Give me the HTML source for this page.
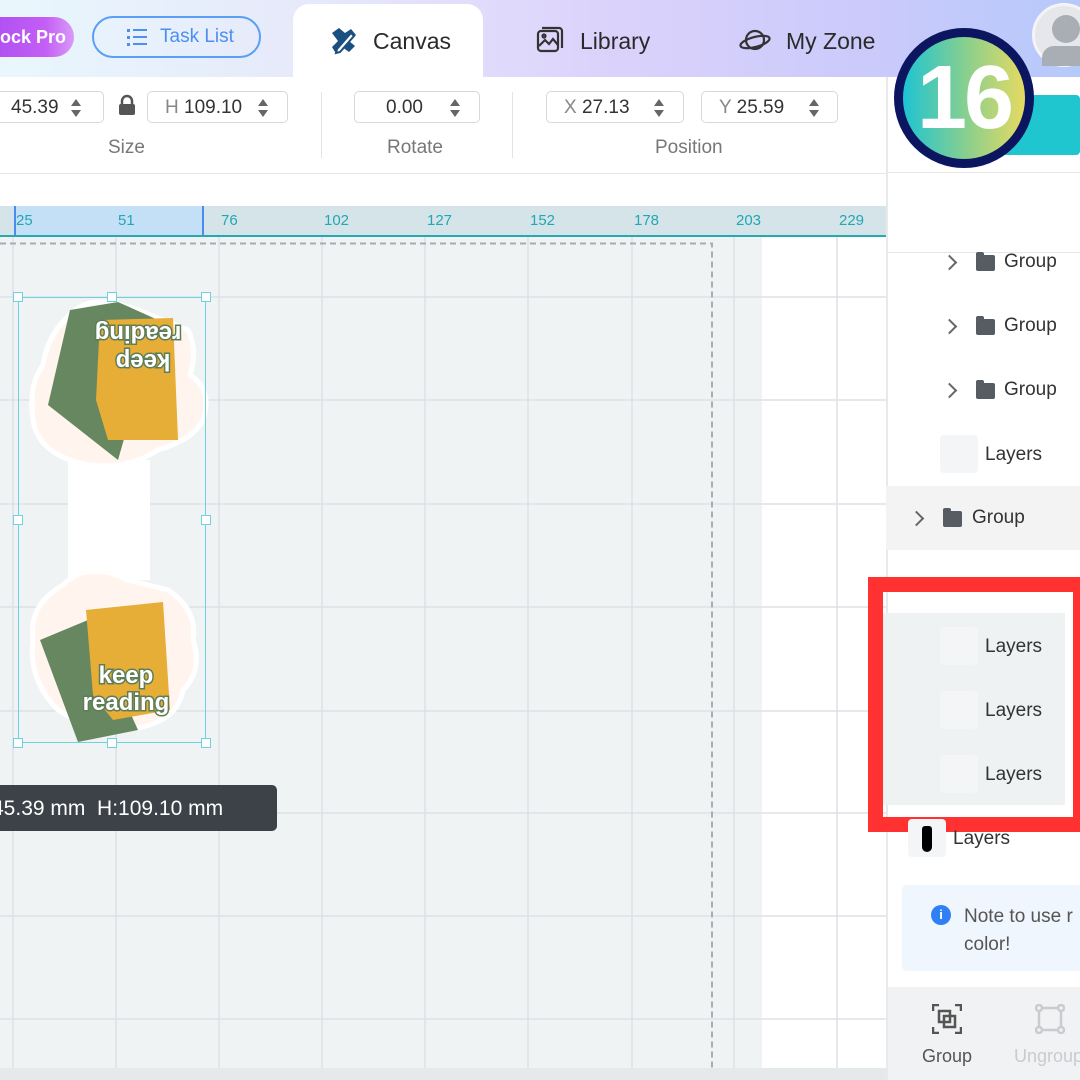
<!DOCTYPE html>
<html><head><meta charset="utf-8"><style>
*{margin:0;padding:0;box-sizing:border-box}
body{width:1080px;height:1080px;overflow:hidden;position:relative;background:#fff;font-family:"Liberation Sans","DejaVu Sans",sans-serif;color:#333}
.a{position:absolute}
.hdr{left:0;top:0;width:1080px;height:77px;background:linear-gradient(90deg,#e9f7fc 0%,#e6e8fb 30%,#dcd3fb 55%,#cbcafb 80%,#b6c9fb 100%)}
.inp{position:absolute;height:32px;border:1.5px solid #d6d8db;border-radius:5px;background:#fff;font-size:19px;color:#333;line-height:31px}
.lbl{position:absolute;font-size:19px;color:#777;top:137px}
.arr{position:absolute;width:10px;top:7px}
.arr:before{content:"";position:absolute;left:0;top:0;border-left:5px solid transparent;border-right:5px solid transparent;border-bottom:7px solid #666}
.arr:after{content:"";position:absolute;left:0;top:11px;border-left:5px solid transparent;border-right:5px solid transparent;border-top:7px solid #666}
.tab{font-size:23px;color:#2a2a2a;top:28px}
.row{position:absolute;left:886px;width:194px;height:64px;font-size:19px;color:#333}
.fold{position:absolute;width:19px;height:16px;background:#555c63;border-radius:2px}
.fold:before{content:"";position:absolute;left:0;top:-3px;width:8px;height:4px;background:#555c63;border-radius:2px 2px 0 0}
.chev{position:absolute;width:11px;height:11px;border-right:2px solid #666;border-top:2px solid #666;transform:rotate(45deg)}
.thumb{position:absolute;width:38px;height:38px;background:#f4f5f6;border-radius:4px}
</style></head><body>
<div class="a hdr"></div>
<div class="a" style="left:-20px;top:17px;width:94px;height:40px;border-radius:20px;background:linear-gradient(90deg,#a84cf0,#c35ff5 70%,#d99af6);color:#fff;font-weight:bold;font-size:18px;line-height:40px;padding-left:20px">ock Pro</div>
<div class="a" style="left:92px;top:16px;width:169px;height:42px;border:2px solid #5b9ef5;border-radius:21px;color:#4a90f0;font-size:19px;line-height:38px;padding-left:66px">Task List</div>
<svg class="a" style="left:127px;top:28px" width="20" height="18"><g fill="#4a90f0"><rect x="0" y="1" width="3" height="3"/><rect x="0" y="8" width="3" height="3"/><rect x="0" y="15" width="3" height="3"/><rect x="6" y="1" width="14" height="2"/><rect x="6" y="8" width="14" height="2"/><rect x="6" y="15" width="14" height="2"/></g></svg>
<div class="a" style="left:293px;top:4px;width:190px;height:74px;background:#fff;border-radius:16px 16px 0 0"></div>
<svg class="a" style="left:329px;top:25px" width="30" height="30" viewBox="0 0 30 30"><path d="M3 8 L10 3 L16 8 L22 4 L27 10 L20 16 L26 21 L20 27 L13 22 L6 27 L3 22 L9 16 Z" fill="#1b4f80"/><path d="M8 24 L22 8 L25 11 L11 27 L7 28Z" fill="#fff" stroke="#1b4f80" stroke-width="2"/></svg>
<div class="a tab" style="left:373px">Canvas</div>
<svg class="a" style="left:536px;top:26px" width="28" height="28" viewBox="0 0 28 28" fill="none" stroke="#333" stroke-width="2.2"><rect x="2" y="5" width="20" height="20" rx="3"/><path d="M6 2h17a3 3 0 0 1 3 3v17"/><path d="M3 20l6-6 4 4 4-5 5 6"/><circle cx="8" cy="10" r="1.5"/></svg>
<div class="a tab" style="left:580px">Library</div>
<svg class="a" style="left:738px;top:26px" width="34" height="28" viewBox="0 0 34 28" fill="none" stroke="#333" stroke-width="2.2"><circle cx="17" cy="14" r="9"/><ellipse cx="17" cy="16" rx="15" ry="5" transform="rotate(-15 17 16)"/></svg>
<div class="a tab" style="left:786px">My Zone</div>
<div class="a" style="left:1032px;top:3px;width:64px;height:64px;border-radius:50%;background:#e6e7ea;border:3px solid #f4f4f6"></div>
<div class="a" style="left:1052px;top:15px;width:28px;height:28px;border-radius:50%;background:#a9adb4"></div>
<div class="a" style="left:1042px;top:46px;width:48px;height:20px;border-radius:12px 12px 0 0;background:#a9adb4"></div>

<!-- toolbar -->
<div class="inp" style="left:-10px;top:91px;width:114px;padding-left:20px">45.39<span class="arr" style="left:80px"></span></div>
<svg class="a" style="left:118px;top:94px" width="18" height="22"><path d="M4 10V7a5 5 0 0 1 10 0v3" fill="none" stroke="#555" stroke-width="2.5"/><rect x="1" y="10" width="16" height="11" rx="2" fill="#555"/></svg>
<div class="inp" style="left:147px;top:91px;width:141px;padding-left:17px"><span style="color:#888">H</span> 109.10<span class="arr" style="left:110px"></span></div>
<div class="lbl" style="left:108px">Size</div>
<div class="a" style="left:321px;top:92px;width:1px;height:66px;background:#e3e4e6"></div>
<div class="inp" style="left:354px;top:91px;width:126px;padding-left:31px">0.00<span class="arr" style="left:95px"></span></div>
<div class="lbl" style="left:387px">Rotate</div>
<div class="a" style="left:512px;top:92px;width:1px;height:66px;background:#e3e4e6"></div>
<div class="inp" style="left:546px;top:91px;width:138px;padding-left:17px"><span style="color:#888">X</span> 27.13<span class="arr" style="left:107px"></span></div>
<div class="inp" style="left:701px;top:91px;width:137px;padding-left:17px"><span style="color:#888">Y</span> 25.59<span class="arr" style="left:107px"></span></div>
<div class="lbl" style="left:655px">Position</div>
<div class="a" style="left:0;top:173px;width:886px;height:1px;background:#e5e6e8"></div>
<div class="a" style="left:886px;top:77px;width:2px;height:1003px;background:#e8e9eb"></div>

<!-- canvas -->
<div class="a" style="left:0;top:237px;width:886px;height:843px;background:#fff"></div>
<div class="a" style="left:0;top:237px;width:762px;height:843px;background:#eff3f4"></div>
<svg class="a" style="left:0;top:237px" width="886" height="843">
<g stroke="#dde1e6" stroke-width="1.5">
<line x1="13" y1="0" x2="13" y2="843"/><line x1="116" y1="0" x2="116" y2="843"/><line x1="219" y1="0" x2="219" y2="843"/><line x1="322" y1="0" x2="322" y2="843"/><line x1="425" y1="0" x2="425" y2="843"/><line x1="528" y1="0" x2="528" y2="843"/><line x1="632" y1="0" x2="632" y2="843"/><line x1="734" y1="0" x2="734" y2="843"/><line x1="837" y1="0" x2="837" y2="843"/>
<line x1="0" y1="60" x2="886" y2="60"/><line x1="0" y1="163" x2="886" y2="163"/><line x1="0" y1="267" x2="886" y2="267"/><line x1="0" y1="370" x2="886" y2="370"/><line x1="0" y1="474" x2="886" y2="474"/><line x1="0" y1="576" x2="886" y2="576"/><line x1="0" y1="679" x2="886" y2="679"/><line x1="0" y1="782" x2="886" y2="782"/>
</g>
<path d="M0 6.5H712V843" fill="none" stroke="#a8adb2" stroke-width="2" stroke-dasharray="6 4"/>
<rect x="0" y="831" width="886" height="12" fill="#e6e9ea"/>
</svg>
<!-- ruler -->
<div class="a" style="left:0;top:206px;width:886px;height:31px;background:#d4e4e8;border-bottom:2px solid #27a9b2"></div>
<div class="a" style="left:14px;top:206px;width:190px;height:29px;background:#c4e0f7;border-left:2px solid #4a8cf0;border-right:2px solid #4a8cf0"></div>
<div class="a" style="left:0;top:212px;width:886px;height:20px;font-size:15px;color:#22a7b4">
<span class="a" style="left:16px">25</span><span class="a" style="left:118px">51</span><span class="a" style="left:221px">76</span><span class="a" style="left:324px">102</span><span class="a" style="left:427px">127</span><span class="a" style="left:530px">152</span><span class="a" style="left:634px">178</span><span class="a" style="left:736px">203</span><span class="a" style="left:839px">229</span></div>

<!-- stickers -->
<div class="a" style="left:68px;top:460px;width:82px;height:120px;background:#fff"></div>
<svg class="a" style="left:18px;top:290px" width="195" height="460" viewBox="0 0 195 460">
<path d="M60 18 Q80 5 120 20 L170 40 Q180 60 172 85 Q195 100 185 130 Q175 150 140 160 Q110 180 70 175 Q20 165 15 130 Q10 95 25 75 Q30 40 60 18Z" fill="#fff5ee" stroke="#fff" stroke-width="5"/>
<path d="M52 20 L100 12 L140 30 L100 170 L30 115Z" fill="#66875f"/>
<path d="M82 30 L155 28 L160 150 L90 150 L78 110Z" fill="#e6ad37"/>
<text x="125" y="80" font-size="24" font-weight="bold" fill="#fff" stroke="#5e7d57" stroke-width="3" paint-order="stroke" text-anchor="middle" transform="rotate(180 125 72)">keep</text>
<text x="120" y="52" font-size="24" font-weight="bold" fill="#fff" stroke="#5e7d57" stroke-width="3" paint-order="stroke" text-anchor="middle" transform="rotate(180 120 44)">reading</text>
<path d="M45 295 Q70 270 110 290 L150 300 Q180 320 175 350 Q185 380 165 400 Q160 430 120 438 Q70 440 40 420 Q10 390 15 350 Q10 315 45 295Z" fill="#fff5ee" stroke="#fff" stroke-width="5"/>
<path d="M22 350 L70 330 L120 440 L60 452 Z" fill="#66875f"/>
<path d="M68 320 L145 312 L152 420 L95 430 L75 405Z" fill="#e6ad37"/>
<text x="108" y="393" font-size="24" font-weight="bold" fill="#fff" stroke="#5e7d57" stroke-width="3" paint-order="stroke" text-anchor="middle">keep</text>
<text x="108" y="420" font-size="24" font-weight="bold" fill="#fff" stroke="#5e7d57" stroke-width="3" paint-order="stroke" text-anchor="middle">reading</text>
</svg>
<!-- selection -->
<div class="a" style="left:18px;top:297px;width:188px;height:446px;border:1.5px solid #6fd0de"></div>
<div class="a" style="left:13px;top:292px;width:10px;height:10px;border:1.5px solid #6fd0de;background:#fff"></div>
<div class="a" style="left:107px;top:292px;width:10px;height:10px;border:1.5px solid #6fd0de;background:#fff"></div>
<div class="a" style="left:201px;top:292px;width:10px;height:10px;border:1.5px solid #6fd0de;background:#fff"></div>
<div class="a" style="left:13px;top:515px;width:10px;height:10px;border:1.5px solid #6fd0de;background:#fff"></div>
<div class="a" style="left:201px;top:515px;width:10px;height:10px;border:1.5px solid #6fd0de;background:#fff"></div>
<div class="a" style="left:13px;top:738px;width:10px;height:10px;border:1.5px solid #6fd0de;background:#fff"></div>
<div class="a" style="left:107px;top:738px;width:10px;height:10px;border:1.5px solid #6fd0de;background:#fff"></div>
<div class="a" style="left:201px;top:738px;width:10px;height:10px;border:1.5px solid #6fd0de;background:#fff"></div>
<div class="a" style="left:-10px;top:785px;width:287px;height:46px;background:#3d4248;border-radius:5px;color:#fff;font-size:21px;line-height:48px;padding-left:2px">45.39 mm&nbsp;&nbsp;H:109.10 mm</div>

<!-- right panel -->
<div class="a" style="left:888px;top:77px;width:192px;height:1003px;background:#fff"></div>
<div class="a" style="left:1000px;top:95px;width:80px;height:60px;background:#1fc6d0;border-radius:4px"></div>
<div class="a" style="left:888px;top:172px;width:192px;height:1px;background:#e5e6e8"></div>
<div class="a" style="left:888px;top:252px;width:192px;height:1px;background:#e5e6e8"></div>
<div class="row" style="top:230px"><span class="chev" style="left:58px;top:27px"></span><span class="fold" style="left:90px;top:25px"></span><span class="a" style="left:118px;top:21px">Group</span></div>
<div class="row" style="top:294px"><span class="chev" style="left:58px;top:27px"></span><span class="fold" style="left:90px;top:25px"></span><span class="a" style="left:118px;top:21px">Group</span></div>
<div class="row" style="top:358px"><span class="chev" style="left:58px;top:27px"></span><span class="fold" style="left:90px;top:25px"></span><span class="a" style="left:118px;top:21px">Group</span></div>
<div class="row" style="top:422px"><span class="thumb" style="left:54px;top:13px"></span><span class="a" style="left:99px;top:22px">Layers</span></div>
<div class="row" style="top:486px;background:#f3f3f3"><span class="chev" style="left:25px;top:27px"></span><span class="fold" style="left:57px;top:25px"></span><span class="a" style="left:86px;top:21px">Group</span></div>
<!-- red box -->
<div class="a" style="left:868px;top:577px;width:220px;height:255px;border:15px solid #ff3131"></div>
<div class="a" style="left:883px;top:613px;width:182px;height:192px;background:#eff2f3"></div>
<div class="row" style="top:614px"><span class="thumb" style="left:54px;top:13px"></span><span class="a" style="left:99px;top:22px">Layers</span></div>
<div class="row" style="top:678px"><span class="thumb" style="left:54px;top:13px"></span><span class="a" style="left:99px;top:22px">Layers</span></div>
<div class="row" style="top:742px"><span class="thumb" style="left:54px;top:13px"></span><span class="a" style="left:99px;top:22px">Layers</span></div>
<div class="row" style="top:806px"><span class="thumb" style="left:22px;top:13px"></span><span class="a" style="left:36px;top:20px;width:10px;height:26px;background:#000;border-radius:3px 3px 5px 5px"></span><span class="a" style="left:67px;top:22px">Layers</span></div>
<div class="a" style="left:902px;top:885px;width:190px;height:86px;background:#f0f6fe;border-radius:5px"></div>
<div class="a" style="left:931px;top:905px;width:20px;height:20px;border-radius:50%;background:#2f80f5;color:#fff;font-size:13px;font-weight:bold;text-align:center;line-height:20px">i</div>
<div class="a" style="left:964px;top:903px;font-size:19px;color:#555;line-height:28px">Note to use r<br>color!</div>
<div class="a" style="left:888px;top:987px;width:192px;height:93px;background:#f1f2f3"></div>
<svg class="a" style="left:932px;top:1004px" width="30" height="30" viewBox="0 0 30 30" fill="none" stroke="#555" stroke-width="2.5"><path d="M1 7V1h6M23 1h6v6M29 23v6h-6M7 29H1v-6"/><rect x="7" y="7" width="11" height="11"/><rect x="12" y="12" width="11" height="11"/></svg>
<div class="a" style="left:922px;top:1046px;font-size:18px;color:#555">Group</div>
<svg class="a" style="left:1035px;top:1004px" width="30" height="30" viewBox="0 0 30 30" fill="none" stroke="#c8cbd0" stroke-width="2.5"><circle cx="4" cy="4" r="3"/><circle cx="26" cy="26" r="3"/><circle cx="26" cy="4" r="3"/><circle cx="4" cy="26" r="3"/><path d="M7 4h16M4 7v16M26 7v16M7 26h16"/></svg>
<div class="a" style="left:1014px;top:1046px;font-size:18px;color:#c8cbd0">Ungroup</div>

<!-- badge -->
<div class="a" style="left:894px;top:28px;width:140px;height:140px;border-radius:50%;border:9px solid #0c1660;background:linear-gradient(90deg,#1ec4d2,#8fd08a 55%,#e6da62)"></div>
<div class="a" style="left:894px;top:38px;width:140px;text-align:center;font-size:90px;font-weight:bold;color:#fff;letter-spacing:-3px;line-height:120px">16</div>
</body></html>
